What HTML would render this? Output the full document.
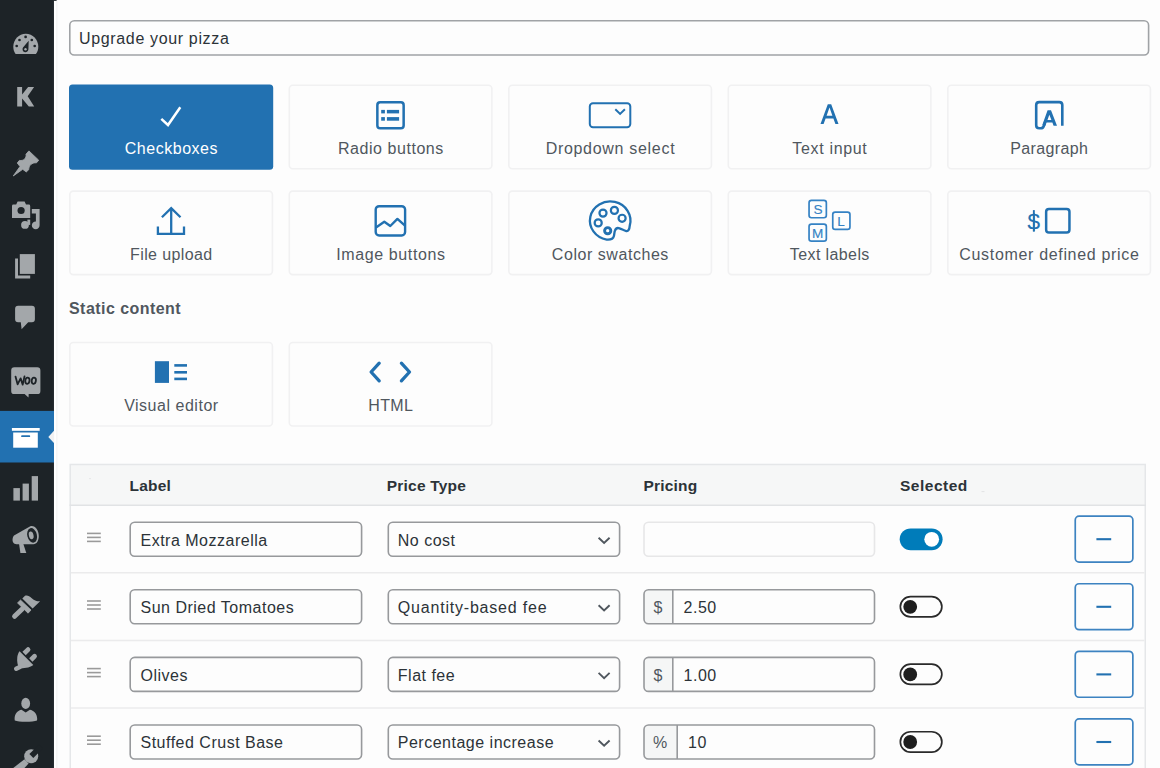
<!DOCTYPE html>
<html>
<head>
<meta charset="utf-8">
<title>Upgrade your pizza</title>
<style>
*{box-sizing:border-box;margin:0;padding:0}
html,body{width:1160px;height:768px;overflow:hidden}
body{position:relative;background:#fdfdfd;font-family:"Liberation Sans",sans-serif;font-size:16px;color:#2c3338;letter-spacing:.5px}
#art{position:absolute;left:0;top:0}
div{position:absolute;white-space:nowrap}
#title{left:79px;top:20px;height:36px;line-height:38.4px;color:#2c3338;letter-spacing:.65px}
.lb{width:204.2px;text-align:center;line-height:20px;color:#50575e}
.lb.on{color:#fff}
#static{left:69px;top:299px;line-height:20px;font-weight:bold;color:#50575e;letter-spacing:.45px}
.th{top:476px;line-height:20px;font-weight:bold;font-size:15.5px;color:#2c3338;letter-spacing:.2px}
.t{height:35.6px;line-height:36.6px;color:#2c3338}
.t.sym{text-align:center;color:#50575e;letter-spacing:0}
</style>
</head>
<body>
<svg id="art" width="1160" height="768" viewBox="0 0 1160 768">
<rect x="0" y="0" width="54" height="768" fill="#1d2327"/>
<rect x="52.7" y="0" width="1.3" height="768" fill="#262c31"/>
<rect x="54" y="0" width="2.2" height="768" fill="#ffffff"/>
<rect x="56" y="0" width="1.5" height="768" fill="#f6f6f6"/>
<rect x="54" y="0" width="2.6" height="1" fill="#3a3f43"/>
<rect x="0" y="410.9" width="54" height="51.6" fill="#2271b1"/>
<path d="M54.2 430.6 L48.3 436.9 L54.2 443.2 Z" fill="#f1f1f2"/>
<rect x="69.80" y="20.80" width="1078.80" height="34.20" rx="4.5" fill="none" stroke="#a0a3a6" stroke-width="1.6"/>
<rect x="69" y="84.5" width="204.2" height="85.19999999999999" rx="3.5" fill="#2271b1"/>
<rect x="289.30" y="85.30" width="202.60" height="83.50" rx="3.5" fill="none" stroke="#f1f1f2" stroke-width="1.6"/>
<rect x="508.80" y="85.30" width="202.60" height="83.50" rx="3.5" fill="none" stroke="#f1f1f2" stroke-width="1.6"/>
<rect x="728.30" y="85.30" width="202.60" height="83.50" rx="3.5" fill="none" stroke="#f1f1f2" stroke-width="1.6"/>
<rect x="947.80" y="85.30" width="202.60" height="83.50" rx="3.5" fill="none" stroke="#f1f1f2" stroke-width="1.6"/>
<rect x="69.80" y="191.10" width="202.60" height="83.50" rx="3.5" fill="none" stroke="#f1f1f2" stroke-width="1.6"/>
<rect x="289.30" y="191.10" width="202.60" height="83.50" rx="3.5" fill="none" stroke="#f1f1f2" stroke-width="1.6"/>
<rect x="508.80" y="191.10" width="202.60" height="83.50" rx="3.5" fill="none" stroke="#f1f1f2" stroke-width="1.6"/>
<rect x="728.30" y="191.10" width="202.60" height="83.50" rx="3.5" fill="none" stroke="#f1f1f2" stroke-width="1.6"/>
<rect x="947.80" y="191.10" width="202.60" height="83.50" rx="3.5" fill="none" stroke="#f1f1f2" stroke-width="1.6"/>
<rect x="69.80" y="342.50" width="202.60" height="83.50" rx="3.5" fill="none" stroke="#f1f1f2" stroke-width="1.6"/>
<rect x="289.30" y="342.50" width="202.60" height="83.50" rx="3.5" fill="none" stroke="#f1f1f2" stroke-width="1.6"/>
<rect x="69.5" y="463.8" width="1076.5" height="41.5" fill="#f6f7f7"/>
<path d="M70.25 768 V464.55 H1145.25 V768" fill="none" stroke="#e5e7e9" stroke-width="1.5"/>
<path d="M69.5 505.2 H1146" stroke="#e1e3e5" stroke-width="1.5"/>
<path d="M71.0 572.80 H1144.5" stroke="#ebebec" stroke-width="1.5"/>
<path d="M71.0 640.40 H1144.5" stroke="#ebebec" stroke-width="1.5"/>
<path d="M71.0 708.00 H1144.5" stroke="#ebebec" stroke-width="1.5"/>
<path d="M981.5 491.6 H984.5" stroke="#e2e3e4" stroke-width="1"/>
<path d="M89 478.6 H91" stroke="#e6e7e8" stroke-width="1"/>
<path d="M87 533.40 H100.8" stroke="#9a9a9a" stroke-width="1.6"/>
<path d="M87 537.40 H100.8" stroke="#9a9a9a" stroke-width="1.6"/>
<path d="M87 541.40 H100.8" stroke="#9a9a9a" stroke-width="1.6"/>
<rect x="130.20" y="522.20" width="231.40" height="34.00" rx="4.5" fill="none" stroke="#97999c" stroke-width="1.6"/>
<rect x="388.30" y="522.20" width="231.30" height="34.00" rx="4.5" fill="none" stroke="#97999c" stroke-width="1.6"/>
<path d="M598.6 537.70 L604.1 542.90 L609.6 537.70" fill="none" stroke="#50575e" stroke-width="1.9"/>
<rect x="644.00" y="522.20" width="230.50" height="34.00" rx="4.5" fill="none" stroke="#e7e7e8" stroke-width="1.6"/>
<rect x="899.7" y="528.40" width="42.9" height="21.8" rx="10.9" fill="#007cba"/>
<circle cx="931.7" cy="539.30" r="7.4" fill="#fff"/>
<rect x="1075.25" y="516.15" width="57.60" height="45.90" rx="3.8" fill="none" stroke="#3d83c1" stroke-width="1.7"/>
<path d="M1096.4 539.20 H1111.2" stroke="#2271b1" stroke-width="2.1"/>
<path d="M87 601.00 H100.8" stroke="#9a9a9a" stroke-width="1.6"/>
<path d="M87 605.00 H100.8" stroke="#9a9a9a" stroke-width="1.6"/>
<path d="M87 609.00 H100.8" stroke="#9a9a9a" stroke-width="1.6"/>
<rect x="130.20" y="589.80" width="231.40" height="34.00" rx="4.5" fill="none" stroke="#97999c" stroke-width="1.6"/>
<rect x="388.30" y="589.80" width="231.30" height="34.00" rx="4.5" fill="none" stroke="#97999c" stroke-width="1.6"/>
<path d="M598.6 605.30 L604.1 610.50 L609.6 605.30" fill="none" stroke="#50575e" stroke-width="1.9"/>
<path d="M672.8 589.80 V623.80 H648 Q644.0 623.80 644.0 620.10 V593.50 Q644.0 589.80 648 589.80 Z" fill="#f5f6f6"/>
<path d="M672.8 589.80 V623.80" stroke="#97999c" stroke-width="1.6"/>
<rect x="644.00" y="589.80" width="230.50" height="34.00" rx="4.5" fill="none" stroke="#97999c" stroke-width="1.6"/>
<rect x="900.35" y="596.55" width="41.50" height="20.30" rx="10.2" fill="none" stroke="#2a2a2a" stroke-width="1.7"/>
<circle cx="910.2" cy="606.80" r="6.9" fill="#1e1e1e"/>
<rect x="1075.25" y="583.75" width="57.60" height="45.90" rx="3.8" fill="none" stroke="#3d83c1" stroke-width="1.7"/>
<path d="M1096.4 606.80 H1111.2" stroke="#2271b1" stroke-width="2.1"/>
<path d="M87 668.60 H100.8" stroke="#9a9a9a" stroke-width="1.6"/>
<path d="M87 672.60 H100.8" stroke="#9a9a9a" stroke-width="1.6"/>
<path d="M87 676.60 H100.8" stroke="#9a9a9a" stroke-width="1.6"/>
<rect x="130.20" y="657.40" width="231.40" height="34.00" rx="4.5" fill="none" stroke="#97999c" stroke-width="1.6"/>
<rect x="388.30" y="657.40" width="231.30" height="34.00" rx="4.5" fill="none" stroke="#97999c" stroke-width="1.6"/>
<path d="M598.6 672.90 L604.1 678.10 L609.6 672.90" fill="none" stroke="#50575e" stroke-width="1.9"/>
<path d="M672.8 657.40 V691.40 H648 Q644.0 691.40 644.0 687.70 V661.10 Q644.0 657.40 648 657.40 Z" fill="#f5f6f6"/>
<path d="M672.8 657.40 V691.40" stroke="#97999c" stroke-width="1.6"/>
<rect x="644.00" y="657.40" width="230.50" height="34.00" rx="4.5" fill="none" stroke="#97999c" stroke-width="1.6"/>
<rect x="900.35" y="664.15" width="41.50" height="20.30" rx="10.2" fill="none" stroke="#2a2a2a" stroke-width="1.7"/>
<circle cx="910.2" cy="674.40" r="6.9" fill="#1e1e1e"/>
<rect x="1075.25" y="651.35" width="57.60" height="45.90" rx="3.8" fill="none" stroke="#3d83c1" stroke-width="1.7"/>
<path d="M1096.4 674.40 H1111.2" stroke="#2271b1" stroke-width="2.1"/>
<path d="M87 736.20 H100.8" stroke="#9a9a9a" stroke-width="1.6"/>
<path d="M87 740.20 H100.8" stroke="#9a9a9a" stroke-width="1.6"/>
<path d="M87 744.20 H100.8" stroke="#9a9a9a" stroke-width="1.6"/>
<rect x="130.20" y="725.00" width="231.40" height="34.00" rx="4.5" fill="none" stroke="#97999c" stroke-width="1.6"/>
<rect x="388.30" y="725.00" width="231.30" height="34.00" rx="4.5" fill="none" stroke="#97999c" stroke-width="1.6"/>
<path d="M598.6 740.50 L604.1 745.70 L609.6 740.50" fill="none" stroke="#50575e" stroke-width="1.9"/>
<path d="M677.2 725.00 V759.00 H648 Q644.0 759.00 644.0 755.30 V728.70 Q644.0 725.00 648 725.00 Z" fill="#f5f6f6"/>
<path d="M677.2 725.00 V759.00" stroke="#97999c" stroke-width="1.6"/>
<rect x="644.00" y="725.00" width="230.50" height="34.00" rx="4.5" fill="none" stroke="#97999c" stroke-width="1.6"/>
<rect x="900.35" y="731.75" width="41.50" height="20.30" rx="10.2" fill="none" stroke="#2a2a2a" stroke-width="1.7"/>
<circle cx="910.2" cy="742.00" r="6.9" fill="#1e1e1e"/>
<rect x="1075.25" y="718.95" width="57.60" height="45.90" rx="3.8" fill="none" stroke="#3d83c1" stroke-width="1.7"/>
<path d="M1096.4 742.00 H1111.2" stroke="#2271b1" stroke-width="2.1"/>

<g fill="#a3a7aa" stroke="none">
  <!-- dashboard -->
  <path d="M15.6 53.9 C13.9 51.6 13.3 49.2 13.3 46.7 C13.3 39.5 18.9 33.7 25.8 33.7 C32.7 33.7 38.3 39.5 38.3 46.7 C38.3 49.2 37.7 51.6 35.9 53.9 Z"/>
  <g fill="#1d2327">
    <circle cx="25.6" cy="36.9" r="1.35"/><circle cx="19.5" cy="40" r="1.35"/><circle cx="31.8" cy="40" r="1.35"/>
    <circle cx="16.7" cy="46" r="1.35"/><circle cx="34.7" cy="46" r="1.35"/>
    <path d="M28.7 40.8 L28.4 49.6 A2.95 2.95 0 1 1 23 47.6 Z"/>
  </g>
  <circle cx="25.5" cy="49.2" r="1.2"/>
  <!-- K -->
  <path d="M17.2 86.9 H22.1 V94.4 L28.1 86.9 H34.1 L27.7 96.2 L34.2 106.5 H28.8 L22.1 98.6 V106.5 H17.2 Z"/>
  <!-- pin -->
  <path d="M13.3 175.9 L20 166.5 L17.3 163 L19.4 160.4 C23.5 161.2 26.8 158.2 26 154.2 L28.9 150.9 L38.7 160.2 L36.5 162.8 C31.8 162.4 28.6 165.6 28.8 169.6 L26.3 171.9 L22.7 169.3 Z" stroke="#a3a7aa" stroke-width="0.9" stroke-linejoin="round"/>
  <!-- media -->
  <path d="M12 206 Q12 204.6 13.4 204.6 H16.2 L17.6 201.5 H24.6 L26 204.6 H28.8 Q30.2 204.6 30.2 206 V217.9 H12 Z"/>
  <circle cx="21.1" cy="210.5" r="3.6" fill="#1d2327"/>
  <path d="M31.8 209.1 H39.6 V225.2 A3.9 3.9 0 1 1 35.9 221.4 V213.5 H31.8 Z"/>
  <circle cx="25" cy="224.9" r="3.9"/>
  <path d="M27.4 219.6 H30.2 V224.9 H27.4 Z"/>
  <!-- pages -->
  <rect x="19.8" y="254.1" width="15.1" height="19.8"/>
  <path d="M15.1 258.5 H18 V275.6 H30.2 V278.6 H15.1 Z"/>
  <!-- comment -->
  <path d="M18.1 305.8 H31.9 Q34.9 305.8 34.9 308.8 V319.2 Q34.9 322.2 31.9 322.2 H28.2 L21.6 329.2 L20.8 322.2 H18.1 Q15.1 322.2 15.1 319.2 V308.8 Q15.1 305.8 18.1 305.8 Z"/>
  <!-- woo -->
  <path d="M14.4 367.3 H37.2 Q40.4 367.3 40.4 370.5 V390.9 Q40.4 394.1 37.2 394.1 H28.7 L28.5 397.6 L24.6 394.1 H14.4 Q11.2 394.1 11.2 390.9 V370.5 Q11.2 367.3 14.4 367.3 Z"/>
  <g fill="none" stroke="#1d2327" stroke-width="1.8" stroke-linecap="round" stroke-linejoin="round"><path d="M15.5 376.6 L17.6 384.3 L20.6 378.4 L22.7 384.6 L24.5 376.4"/><ellipse cx="27.4" cy="380.7" rx="2.1" ry="3.1" transform="rotate(8 27.4 380.7)"/><ellipse cx="33.8" cy="380.7" rx="2.1" ry="3.1" transform="rotate(8 33.8 380.7)"/></g>
  <!-- bars -->
  <rect x="13.4" y="488.1" width="6.5" height="12.5"/>
  <rect x="22.6" y="483.6" width="6.3" height="17"/>
  <rect x="31.7" y="476.1" width="6.3" height="24.5"/>
  <!-- megaphone -->
  <path d="M14 535.5 L30.3 526.2 C35 525 38.8 530 38.8 536.1 C38.8 541 36.5 544.3 33.5 544.3 L16.5 544.3 C13.5 544 12.2 541.5 12.6 539 C12.8 537.5 13.2 536.3 14 535.5 Z"/>
  <path d="M19 543.5 L23.2 543.5 L26.3 552.9 L20.4 552.9 Z"/>
  <ellipse cx="32.1" cy="535.4" rx="4.8" ry="7.4" transform="rotate(-14 32.1 535.4)" fill="#1d2327"/>
  <ellipse cx="31.2" cy="535.4" rx="2.3" ry="3.9" transform="rotate(-14 31.2 535.4)"/>
  <!-- brush -->
  <path d="M22.2 609 L14.6 616.3" stroke="#a3a7aa" stroke-width="5" stroke-linecap="round" fill="none"/>
  <path d="M17.5 602.9 L20.5 600.1 L31 610 L28.1 613.2 Z" stroke="#a3a7aa" stroke-width="0.8" stroke-linejoin="round"/>
  <path d="M22.3 598.4 L25 595.8 C27 594.7 29.5 596 31.5 598 C34 600.5 37 601.5 40.1 601.3 L32.6 608.6 Z"/>
  <!-- plugin -->
  <path d="M19.6 651.2 L33.3 664.9 C29.5 668 23 668 19.5 668.6 C17.5 666 16.8 661 17.3 657 C17.7 654.5 18.5 652.5 19.6 651.2 Z"/>
  <path d="M19.8 667 L16.2 668.8" stroke="#a3a7aa" stroke-width="4.4" stroke-linecap="round"/>
  <path transform="translate(24.1 653.5) rotate(-45)" d="M0 -2.35 H5.6 A2.35 2.35 0 0 1 5.6 2.35 H0 Z"/><path transform="translate(30.8 660) rotate(-45)" d="M0 -2.35 H5.3 A2.35 2.35 0 0 1 5.3 2.35 H0 Z"/>
  <!-- user -->
  <ellipse cx="25.7" cy="703.4" rx="4.4" ry="5.6"/>
  <path d="M14.6 719 C14.6 713.5 18 710.5 21.5 709.8 L25.7 712.6 L29.9 709.8 C33.5 710.5 37.2 713.5 37.2 719 L37 720.5 C33 722.2 18.5 722.2 14.8 720.5 Z"/>
  <!-- wrench -->
  <circle cx="31.2" cy="756.2" r="7"/>
  <path d="M24.5 759.2 L28.6 763.6 L24 768.5 L12.6 768.5 Z"/>
  <path d="M29.4 754 L39 744.4 L43 748.2 L33.3 757.9 Z" fill="#1d2327"/>
</g>
<!-- active archive icon -->
<g fill="#fff">
  <rect x="11.9" y="428" width="27.8" height="2.8"/>
  <rect x="13.2" y="432.5" width="24.6" height="15.2"/>
  <rect x="21.1" y="435.3" width="9.1" height="1.8" rx="0.9" fill="#2271b1"/>
</g>

<!-- tile icons -->
<g fill="none" stroke="#2271b1" stroke-linecap="butt">
  <!-- checkmark -->
  <path d="M161.3 118.8 L168 125 L180.3 107.2" stroke="#fff" stroke-width="2.5"/>
  <!-- radio -->
  <rect x="377.35" y="102.35" width="26.3" height="25.9" rx="2.8" stroke-width="2.5"/>
  <g fill="#2271b1" stroke="none">
    <rect x="381.2" y="109.9" width="3.7" height="3.5"/><rect x="386.9" y="109.9" width="12.2" height="3.5"/>
    <rect x="381.2" y="117.1" width="3.7" height="3.6"/><rect x="386.9" y="117.1" width="12.2" height="3.6"/>
  </g>
  <!-- dropdown -->
  <rect x="589.8" y="103.25" width="40.5" height="24" rx="3.2" stroke-width="2"/>
  <path d="M615.3 109.3 L620.1 113.9 L624.9 109.3" stroke-width="2"/>
  <!-- text input A -->
  <path d="M820.5 124 L827.8 104.3 H831.2 L838.5 124 H835.4 L833.4 118.4 H825.6 L823.6 124 Z M826.6 115.7 H832.4 L829.5 107.6 Z" fill="#2271b1" stroke="none" fill-rule="evenodd"/>
  <!-- paragraph -->
  <path d="M1062.3 125.8 V105.1 Q1062.3 102.1 1059.3 102.1 H1039.2 Q1036.2 102.1 1036.2 105.1 V125.2 Q1036.2 128.2 1039.2 128.2 H1040.8 Q1043 128.2 1043.7 126.2 L1045.2 122" stroke-width="2.6" stroke-linejoin="round"/>
  <path d="M1042.2 125.2 L1047.6 110.2 H1051 L1057 125.7 H1053.6 L1052.4 122.6 H1046.5 L1045.4 125.7 Z M1047.46 120 H1051.4 L1049.36 114.74 Z" fill="#2271b1" stroke="none" fill-rule="evenodd"/>
  <!-- upload -->
  <path d="M161.9 217.3 L171.2 208.1 L180.5 217.3 M171.2 208.4 V233 M157.9 226.4 V233.8 H184 V226.4" stroke-width="2.3"/>
  <!-- image -->
  <rect x="375.7" y="206.2" width="29.4" height="29.3" rx="3.4" stroke-width="2.4"/>
  <path d="M376 227.5 L384.3 221.8 L390.3 226 L397.4 218.9 L405 225.6" stroke-width="2.4" stroke-linejoin="round"/>
  <!-- palette -->
  <path d="M629.76 225.6 A20.25 19.2 0 1 0 606.68 239.56 C611 239.9 613.3 238.6 613.9 236 C614.5 233.5 614.3 232 615 230.5 C615.8 228.5 617.5 227.6 619.5 228.3 C622 229.2 624 230.6 626.3 231.1 C628.3 231.5 629.4 229.5 629.76 225.6 Z" stroke-width="2.3" stroke-linejoin="round"/>
  <circle cx="603" cy="213.1" r="3.55" stroke-width="2.2"/>
  <circle cx="614.4" cy="210.4" r="3.55" stroke-width="2.2"/>
  <circle cx="622.1" cy="218.3" r="3.55" stroke-width="2.2"/>
  <circle cx="598.2" cy="222.9" r="3.55" stroke-width="2.2"/>
  <circle cx="607.7" cy="230.7" r="3.1" stroke-width="2.9"/>
  <!-- text labels -->
  <g stroke="#3582c4" stroke-width="1.7">
    <rect x="809.05" y="200.35" width="17.3" height="17.4" rx="2.4"/>
    <rect x="832.75" y="212.15" width="17.2" height="17.3" rx="2.4"/>
    <rect x="809.05" y="224.05" width="17.3" height="17" rx="2.4"/>
  </g>
  <g fill="#3582c4" stroke="#3582c4" stroke-width="0.12" font-family="Liberation Sans" font-size="13.6" text-anchor="middle">
    <text x="818.2" y="213.5">S</text><text x="841.2" y="225.5">L</text><text x="817.9" y="237.6">M</text>
  </g>
  <!-- price -->
  <text x="1033.9" y="228.9" text-anchor="middle" font-family="Liberation Sans" font-size="22.5" fill="#2271b1" stroke="#2271b1" stroke-width="0.15">$</text><path d="M1033.85 210.1 V231.7" stroke-width="1.9"/>
  <rect x="1046.15" y="208.95" width="23.3" height="23.5" rx="2.8" stroke-width="2.5"/>
  <!-- visual editor -->
  <g fill="#2271b1" stroke="none">
    <rect x="154.9" y="361.2" width="14.1" height="21.7"/>
    <rect x="174.3" y="364.1" width="12.7" height="2.6"/><rect x="174.3" y="371" width="12.7" height="2.6"/><rect x="174.3" y="377.6" width="12.7" height="2.6"/>
  </g>
  <!-- html -->
  <path d="M379.2 363.2 L371.1 372 L379.2 380.8 M401.4 363.2 L409.5 372 L401.4 380.8" stroke-width="3.3" stroke-linecap="round" stroke-linejoin="round"/>
</g>

</svg>
<div id="title">Upgrade your pizza</div>
<div class="lb on" style="left:69.3px;top:138.7px;letter-spacing:0.52px">Checkboxes</div>
<div class="lb" style="left:288.8px;top:138.7px;letter-spacing:0.56px">Radio buttons</div>
<div class="lb" style="left:508.4px;top:138.7px;letter-spacing:0.7px">Dropdown select</div>
<div class="lb" style="left:727.8px;top:138.7px;letter-spacing:0.66px">Text input</div>
<div class="lb" style="left:947.2px;top:138.7px;letter-spacing:0.39px">Paragraph</div>
<div class="lb" style="left:69.2px;top:244.5px;letter-spacing:0.37px">File upload</div>
<div class="lb" style="left:288.8px;top:244.5px;letter-spacing:0.62px">Image buttons</div>
<div class="lb" style="left:508.3px;top:244.5px;letter-spacing:0.55px">Color swatches</div>
<div class="lb" style="left:727.7px;top:244.5px;letter-spacing:0.4px">Text labels</div>
<div class="lb" style="left:947.3px;top:244.5px;letter-spacing:0.67px">Customer defined price</div>
<div class="lb" style="left:69.3px;top:395.9px;letter-spacing:0.52px">Visual editor</div>
<div class="lb" style="left:288.7px;top:395.9px;letter-spacing:0.38px">HTML</div>

<div id="static">Static content</div>
<div class="th" style="left:129.6px">Label</div>
<div class="th" style="left:386.8px">Price Type</div>
<div class="th" style="left:643.5px">Pricing</div>
<div class="th" style="left:900px;letter-spacing:.5px">Selected</div>
<div class="t" style="left:140.5px;top:523.4px">Extra Mozzarella</div><div class="t" style="left:397.8px;top:523.4px;">No cost</div>
<div class="t" style="left:140.5px;top:590.0px">Sun Dried Tomatoes</div><div class="t" style="left:397.8px;top:590.0px; letter-spacing:.8px;">Quantity-based fee</div><div class="t sym" style="left:644.0px;width:28.0px;top:590.0px">$</div><div class="t" style="left:683.6px;top:590.0px">2.50</div>
<div class="t" style="left:140.5px;top:657.6px">Olives</div><div class="t" style="left:397.8px;top:657.6px;">Flat fee</div><div class="t sym" style="left:644.0px;width:28.0px;top:657.6px">$</div><div class="t" style="left:683.6px;top:657.6px">1.00</div>
<div class="t" style="left:140.5px;top:725.2px">Stuffed Crust Base</div><div class="t" style="left:397.8px;top:725.2px;">Percentage increase</div><div class="t sym" style="left:644.0px;width:32.4px;top:725.2px">%</div><div class="t" style="left:688.0px;top:725.2px">10</div>

</body>
</html>
